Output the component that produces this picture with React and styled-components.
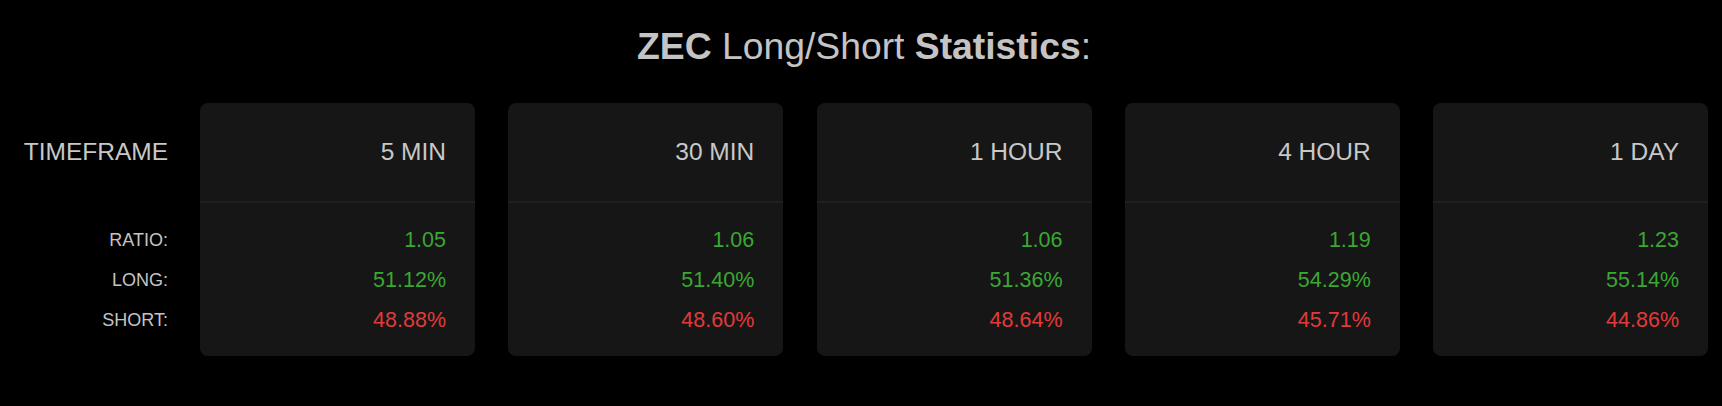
import React from "react";
import styled, { createGlobalStyle } from "styled-components";

const Global = createGlobalStyle`
  html, body { margin: 0; padding: 0; background: #000; }
  body { font-family: "Liberation Sans", Arial, Helvetica, sans-serif; width: 1722px; height: 406px; overflow: hidden; }
`;

const Page = styled.div`
  background: #000;
  width: 1722px;
  height: 406px;
  box-sizing: border-box;
  padding-top: 25px;
`;

const Title = styled.h1`
  margin: 0;
  height: 43px;
  text-align: center;
  font-size: 37.3px;
  line-height: 43px;
  font-weight: 400;
  color: #c4c4c4;
  padding-left: 6px;
  b { font-weight: 700; }
`;

const Table = styled.div`
  display: flex;
  margin-top: 35px;
`;

const LabelColumn = styled.div`
  width: 200px;
  flex: none;
  display: flex;
  flex-direction: column;
  align-items: flex-end;
  padding-right: 32px;
  box-sizing: border-box;
`;

const HeaderLabel = styled.div`
  height: 100px;
  display: flex;
  align-items: center;
  font-size: 24.5px;
  color: #c8c8c8;
  padding-bottom: 2px;
  box-sizing: border-box;
`;

const Cards = styled.div`
  display: flex;
  gap: 33.25px;
`;

const Card = styled.div`
  width: 275px;
  background: #161616;
  border-radius: 8px;
  display: flex;
  flex-direction: column;
  align-items: stretch;
`;

const CardHeader = styled.div`
  height: 100px;
  box-sizing: border-box;
  border-bottom: 2px solid #202020;
  display: flex;
  align-items: center;
  justify-content: flex-end;
  padding-right: 29px;
  font-size: 24.5px;
  color: #c8c8c8;
`;

const Body = styled.div`
  padding: 17px 29px 16px 0;
  display: flex;
  flex-direction: column;
  align-items: flex-end;
`;

const LabelBody = styled.div`
  padding: 17px 0 16px 0;
  display: flex;
  flex-direction: column;
  align-items: flex-end;
`;

const RowLabel = styled.div`
  height: 40px;
  display: flex;
  align-items: center;
  font-size: 18px;
  color: #c4c4c4;
`;

const Value = styled.div`
  height: 40px;
  display: flex;
  align-items: center;
  font-size: 21.5px;
  color: ${(p) => (p.$tone === "red" ? "#e23a3a" : "#3aa832")};
`;

const data = [
  { tf: "5 MIN", ratio: "1.05", long: "51.12%", short: "48.88%" },
  { tf: "30 MIN", ratio: "1.06", long: "51.40%", short: "48.60%" },
  { tf: "1 HOUR", ratio: "1.06", long: "51.36%", short: "48.64%" },
  { tf: "4 HOUR", ratio: "1.19", long: "54.29%", short: "45.71%" },
  { tf: "1 DAY", ratio: "1.23", long: "55.14%", short: "44.86%" },
];

export default function App() {
  return (
    <Page>
      <Global />
      <Title>
        <b>ZEC</b> Long/Short <b>Statistics</b>:
      </Title>
      <Table>
        <LabelColumn>
          <HeaderLabel>TIMEFRAME</HeaderLabel>
          <LabelBody>
            <RowLabel>RATIO:</RowLabel>
            <RowLabel>LONG:</RowLabel>
            <RowLabel>SHORT:</RowLabel>
          </LabelBody>
        </LabelColumn>
        <Cards>
          {data.map((d) => (
            <Card key={d.tf}>
              <CardHeader>{d.tf}</CardHeader>
              <Body>
                <Value>{d.ratio}</Value>
                <Value>{d.long}</Value>
                <Value $tone="red">{d.short}</Value>
              </Body>
            </Card>
          ))}
        </Cards>
      </Table>
    </Page>
  );
}
